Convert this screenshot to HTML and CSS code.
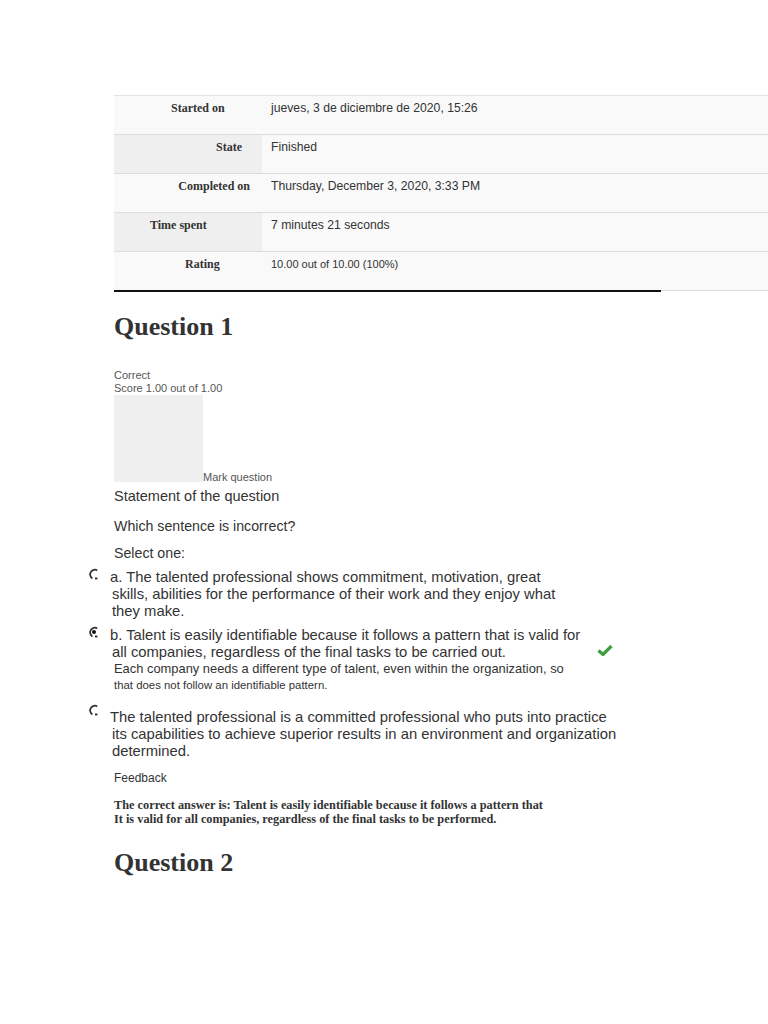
FILE: index.html
```html
<!DOCTYPE html>
<html>
<head>
<meta charset="utf-8">
<link rel="stylesheet" href="styles.css">
</head>
<body>
<div class="page">
  <table class="summary">
    <colgroup><col class="col-h"><col class="col-v"></colgroup>
    <tr class="light">
      <th class="c-start">Started on</th>
      <td>jueves, 3 de diciembre de 2020, 15:26</td>
    </tr>
    <tr class="dark">
      <th class="c-state">State</th>
      <td>Finished</td>
    </tr>
    <tr class="light">
      <th class="c-completed">Completed on</th>
      <td>Thursday, December 3, 2020, 3:33 PM</td>
    </tr>
    <tr class="dark">
      <th class="c-time">Time spent</th>
      <td>7 minutes 21 seconds</td>
    </tr>
    <tr class="light">
      <th class="c-rating">Rating</th>
      <td class="small">10.00 out of 10.00 (100%)</td>
    </tr>
  </table>
  <div class="rule"></div>

  <h2 class="qtitle">Question 1</h2>
  <div class="meta">Correct<br>Score 1.00 out of 1.00</div>
  <div class="flag-row"><div class="flag-box"></div><span class="flag-label">Mark question</span></div>
  <div class="statement">Statement of the question</div>
  <div class="question">Which sentence is incorrect?</div>
  <div class="select">Select one:</div>

  <div class="option opt-a">
    <svg class="radio" viewBox="0 0 12 12" width="12" height="12"><path d="M9.2 2.4 A4.6 4.6 0 1 0 4.4 10.4" fill="none" stroke="#333" stroke-width="1.7"/><rect x="7" y="9.6" width="2.4" height="1.8" fill="#222"/></svg>
    <div class="otext">a. The talented professional shows commitment, motivation, great skills, abilities for the performance of their work and they enjoy what they make.</div>
  </div>
  <div class="option opt-b">
    <svg class="radio" viewBox="0 0 12 12" width="12" height="12"><path d="M9.2 2.4 A4.6 4.6 0 1 0 4.4 10.4" fill="none" stroke="#333" stroke-width="1.7"/><rect x="7" y="9.6" width="2.4" height="1.8" fill="#222"/><circle cx="6" cy="6" r="2" fill="#111"/></svg>
    <div class="otext">b. Talent is easily identifiable because it follows a pattern that is valid for all companies, regardless of the final tasks to be carried out.
      <div class="explain">Each company needs a different type of talent, even within the organization, so</div>
      <div class="explain2">that does not follow an identifiable pattern.</div>
    </div>
    <svg class="check" viewBox="0 0 16 12" width="16" height="12"><path d="M1.5 6.5 L6 10.5 L14.5 2" fill="none" stroke="#3d9c3d" stroke-width="3.2" stroke-linejoin="miter"/></svg>
  </div>
  <div class="option opt-c">
    <svg class="radio" viewBox="0 0 12 12" width="12" height="12"><path d="M9.2 2.4 A4.6 4.6 0 1 0 4.4 10.4" fill="none" stroke="#333" stroke-width="1.7"/><rect x="7" y="9.6" width="2.4" height="1.8" fill="#222"/></svg>
    <div class="otext">The talented professional is a committed professional who puts into practice its capabilities to achieve superior results in an environment and organization determined.</div>
  </div>

  <div class="feedback">Feedback</div>
  <div class="answer">The correct answer is: Talent is easily identifiable because it follows a pattern that<br>It is valid for all companies, regardless of the final tasks to be performed.</div>

  <h2 class="qtitle q2">Question 2</h2>
</div>
</body>
</html>
```

FILE: styles.css
```css
html, body {
  margin: 0;
  padding: 0;
  background: #ffffff;
}
.page {
  padding: 95px 0 0 114px;
  font-family: "Liberation Sans", Arial, sans-serif;
  color: #333333;
}
.summary {
  width: 654px;
  table-layout: fixed;
  border-collapse: collapse;
  border-top: 1px solid #e2e2e2;
}
.col-h { width: 148px; }
.col-v { width: 506px; }
.summary tr {
  height: 39px;
  border-bottom: 1px solid #dddddd;
}
.summary th, .summary td {
  vertical-align: top;
  padding-top: 5px;
  padding-bottom: 0;
  line-height: 14px;
}
.summary th {
  font-family: "Liberation Serif", "Times New Roman", serif;
  font-weight: bold;
  font-size: 12px;
  color: #333333;
  padding-left: 0;
  padding-right: 0;
  white-space: nowrap;
}
.summary td {
  font-size: 12.2px;
  padding-left: 9px;
  color: #333333;
}
.summary td.small {
  font-size: 11px;
}
.light th, .light td { background: #f9f9f9; }
.dark th { background: #efefef; }
.dark td { background: #f9f9f9; }
.c-start { text-align: left; padding-left: 57px !important; }
.c-state { text-align: right; padding-right: 20px !important; }
.c-completed { text-align: right; padding-right: 12px !important; }
.c-time { text-align: left; padding-left: 36px !important; }
.c-rating { text-align: left; padding-left: 71px !important; }

.rule {
  width: 547px;
  height: 2px;
  background: #111111;
  margin-top: -1px;
}
.qtitle {
  font-family: "Liberation Serif", "Times New Roman", serif;
  font-weight: bold;
  font-size: 26px;
  line-height: 30px;
  margin: 20px 0 0 0;
  color: #333333;
}
.meta {
  margin-top: 27px;
  font-size: 11px;
  line-height: 13px;
  color: #555555;
}
.flag-row {
  display: flex;
  align-items: flex-end;
}
.flag-box {
  width: 89px;
  height: 87px;
  background: #efefef;
}
.flag-label {
  font-size: 11px;
  line-height: 11px;
  color: #555555;
  margin-bottom: -1px;
}
.statement {
  font-size: 14.5px;
  line-height: 17px;
  margin-top: 6px;
}
.question {
  font-size: 14.2px;
  line-height: 17px;
  margin-top: 13px;
}
.select {
  font-size: 14.2px;
  line-height: 17px;
  margin-top: 10px;
}
.option {
  display: flex;
  align-items: flex-start;
  position: relative;
  margin-left: -27px;
}
.radio {
  flex: none;
  margin-top: -1px;
  margin-left: 1px;
  width: 12px;
  height: 12px;
}
.otext {
  font-size: 14.8px;
  line-height: 17px;
  padding-left: 12px;
  text-indent: -2px;
}
.opt-a { margin-top: 7px; }
.opt-a .otext { width: 462px; }
.opt-b { margin-top: 7px; }
.opt-b .otext { width: 482px; }
.opt-c { margin-top: 12px; }
.opt-c .otext { width: 510px; margin-top: 4px; }
.explain {
  font-size: 12.9px;
  line-height: 16px;
  text-indent: 0;
  margin-left: 2px;
}
.explain2 {
  font-size: 11.4px;
  line-height: 16px;
  text-indent: 0;
  margin-left: 2px;
}
.check {
  position: absolute;
  left: 510px;
  top: 17px;
}
.feedback {
  font-size: 12px;
  line-height: 14px;
  margin-top: 11px;
}
.answer {
  font-family: "Liberation Serif", "Times New Roman", serif;
  font-weight: bold;
  font-size: 12.3px;
  line-height: 14px;
  margin-top: 13px;
  color: #333333;
}
.q2 {
  margin-top: 22px;
}
```
